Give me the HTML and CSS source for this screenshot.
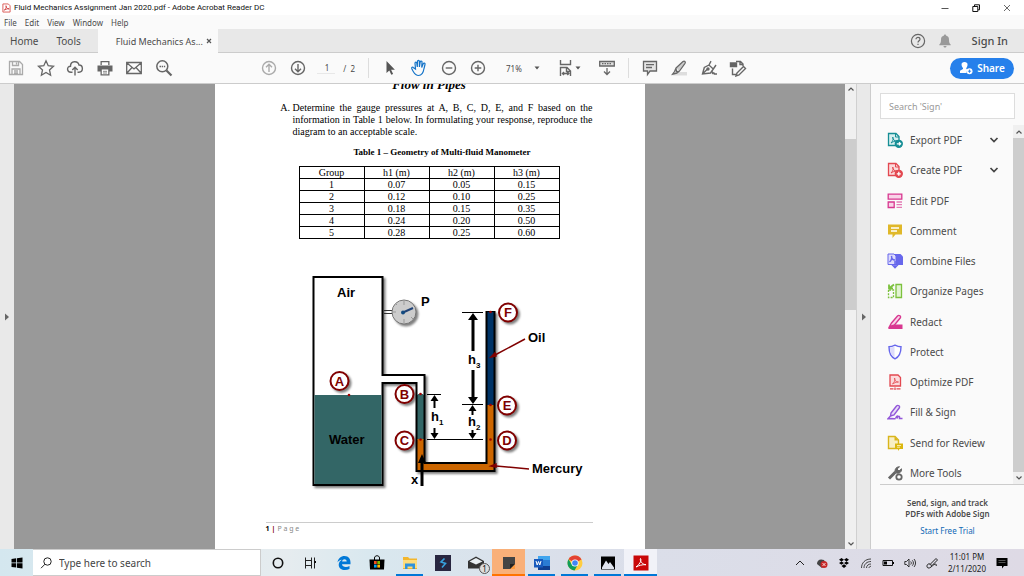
FILE: index.html
```
<!DOCTYPE html>
<html lang="en">
<head>
<meta charset="UTF-8">
<title>Fluid Mechanics Assignment Jan 2020.pdf - Adobe Acrobat Reader DC</title>
<link rel="stylesheet" href="styles.css">
</head>
<body>
    <header class="titlebar">
        <svg class="app-icon" viewBox="0 0 10 10"><path d="M1 .5h6l2 2v7H1z" fill="#fff" stroke="#d9534f"/><path d="M2.500 7.500C5 5 5 3 4.500 2.500S4.500 6 8 6C5 5.500 3.500 7 2.500 7.500" fill="none" stroke="#c81e1e" stroke-width=".8"/></svg>
        <span class="title">Fluid Mechanics Assignment Jan 2020.pdf - Adobe Acrobat Reader DC</span>
        <div class="window-buttons">
            <button aria-label="Minimize"><svg viewBox="0 0 8 8"><path d="M.5 4.500h7" stroke="#555"/></svg></button>
            <button aria-label="Restore"><svg viewBox="0 0 8 8" fill="none" stroke="#111"><path d="M.8 2.500h5v5h-5zM2.500 2V.8h5v5H6"/></svg></button>
            <button aria-label="Close"><svg viewBox="0 0 8 8"><path d="M1 1l6 6M7 1L1 7" stroke="#444" stroke-width=".8"/></svg></button>
        </div>
    </header>
    <nav class="menubar">
        <button>File</button>
        <button>Edit</button>
        <button>View</button>
        <button>Window</button>
        <button>Help</button>
    </nav>
    <div class="tabbar">
        <button class="tab">Home</button>
        <button class="tab tools-tab">Tools</button>
        <div class="doc-tab">
            <button class="tab-name">Fluid Mechanics As...</button>
            <button class="tab-close" aria-label="Close tab"><svg viewBox="0 0 6 6"><path d="M1 1l4 4M5 1L1 5" stroke="#555" stroke-width="1.200"/></svg></button>
        </div>
        <div class="account">
            <button aria-label="Help"><svg viewBox="0 0 16 16" fill="none" stroke="#666" stroke-width="1.200"><circle cx="8" cy="8" r="6.600"/><path d="M6 6.300c0-2.500 4-2.500 4 0C10 7.800 8 7.800 8 9.500M8 10.800v1.200"/></svg></button>
            <button aria-label="Notifications"><svg viewBox="0 0 16 16" fill="#999"><path d="M8 1.500c.7 0 1 .4 1 1 2.300.6 3 2.300 3 4.300 0 2.800.5 3.600 1.700 4.700v.8H2.300v-.8C3.500 10.400 4 9.600 4 6.800c0-2 .7-3.700 3-4.300 0-.6.3-1 1-1zM6.500 13h3c0 2-3 2-3 0z"/></svg></button>
            <button class="sign-in">Sign In</button>
        </div>
    </div>
    <div class="toolbar">
        <div class="group file-group">
            <button aria-label="Save"><svg viewBox="0 0 18 18" fill="none" stroke="#aaa" stroke-width="1.300"><path d="M2.500 2.500h10l3 3v10h-13zM5.500 2.500v4h6v-4M5 15.500V10h8v5.500M7 12h4M7 14h4M9.500 3.500v2"/></svg></button>
            <button aria-label="Star"><svg viewBox="0 0 18 18" fill="none" stroke="#666" stroke-width="1.300"><path d="M9 1.800l2.200 4.900 5.300.6-4 3.600 1.100 5.300L9 13.500l-4.600 2.700 1.100-5.300-4-3.600 5.300-.6z"/></svg></button>
            <button aria-label="Upload"><svg viewBox="0 0 18 18" fill="none" stroke="#666" stroke-width="1.400"><path d="M6.500 13.200H5c-4.500 0-4.500-6-.5-6C4.500 1.500 12 1.500 13 6c4.500 0 4.500 7.200 0 7.200h-1.500M9 16.500V8.500M6.300 11L9 8.200l2.700 2.800"/></svg></button>
            <button aria-label="Print"><svg viewBox="0 0 18 18"><path d="M4.500 2h9v4h-9zM1.500 6.500h15v6h-3v4h-9v-4h-3z" fill="#666"/><path d="M5.800 3.300h6.400V6H5.800zM5.800 10.500h6.400v4.700H5.800z" fill="#fff"/><path d="M7 12.300h4M7 14h4" stroke="#888"/></svg></button>
            <button aria-label="Email"><svg viewBox="0 0 18 18" fill="none" stroke="#666" stroke-width="1.300"><path d="M1.700 3.500h14.600v11H1.700zM2 4l7 6 7-6M2 14l5-5.500M16 14l-5-5.500"/></svg></button>
            <button aria-label="Find"><svg viewBox="0 0 18 18" fill="none" stroke="#666" stroke-width="1.500"><circle cx="7.300" cy="7.300" r="5.500"/><path d="M11.500 11.500l5 5" stroke-width="2.200"/><path d="M4.500 7.500H6M6.700 7.500H8M8.800 7.500h1.400"/></svg></button>
        </div>
        <div class="group page-group">
            <button aria-label="Previous page"><svg viewBox="0 0 18 18" fill="none" stroke="#aaa" stroke-width="1.400"><circle cx="9" cy="9" r="6.500"/><path d="M9 13V5.500M6 8.300l3-3 3 3"/></svg></button>
            <button aria-label="Next page"><svg viewBox="0 0 18 18" fill="none" stroke="#666" stroke-width="1.400"><circle cx="9" cy="9" r="6.500"/><path d="M9 5v7.500M6 9.700l3 3 3-3"/></svg></button>
            <input class="page-no" type="text" value="1" aria-label="Page number">
            <span class="page-total">/&nbsp; 2</span>
        </div>
        <div class="group view-group">
            <button aria-label="Select"><svg viewBox="0 0 18 18"><path d="M5.500 2v12l2.800-2.600 2 4.300 1.800-.8-2-4.200h3.800z" fill="#555"/></svg></button>
            <button aria-label="Hand"><svg viewBox="0 0 18 18" fill="none" stroke="#1473c8" stroke-width="1.200"><path d="M5.500 10L5 4.200c0-1.500 1.600-1.500 1.800 0L7.300 8 7.500 2.500c0-1.500 1.900-1.500 1.900 0V8l.8-5c.2-1.400 2-1.200 1.800.2L11.700 8.500l1.500-3.700c.6-1.300 2.200-.6 1.800.7l-1 4c-.6 4-2 7-5.500 7-3 0-4-2-5.500-4.500L1.800 9.700c-.5-1.300.8-2 1.700-1z"/></svg></button>
            <button aria-label="Zoom out"><svg viewBox="0 0 18 18" fill="none" stroke="#666" stroke-width="1.400"><circle cx="9" cy="9" r="6.500"/><path d="M5.700 9h6.600"/></svg></button>
            <button aria-label="Zoom in"><svg viewBox="0 0 18 18" fill="none" stroke="#666" stroke-width="1.400"><circle cx="9" cy="9" r="6.500"/><path d="M5.700 9h6.600M9 5.700v6.600"/></svg></button>
        </div>
        <button class="zoom-level">71%<svg class="caret" viewBox="0 0 6 4"><path d="M.5.500h5L3 3.500z" fill="#555"/></svg></button>
        <div class="group fit-group">
            <button class="fit" aria-label="Fit page"><svg viewBox="0 0 18 18" fill="none" stroke="#666" stroke-width="1.400"><path d="M3.500 1v4.500h10V1M3.500 17V8.500h6.500l3.500 3.500v5M9.500 8.500v4h4M5.500 14.500h6M7 13l-1.500 1.500L7 16M10.300 13l1.500 1.500-1.500 1.500"/></svg><svg class="caret" viewBox="0 0 6 4"><path d="M.5.500h5L3 3.500z" fill="#555"/></svg></button>
            <button aria-label="Toolbar dock"><svg viewBox="0 0 18 18" fill="none" stroke="#666" stroke-width="1.300"><path d="M1.700 2.500h14.600v4.500H1.700z" fill="#ddd"/><path d="M4 4.700h10" stroke-dasharray="1.500 1"/><path d="M9 9v6M6 12.500l3 3 3-3"/></svg></button>
        </div>
        <div class="group markup-group">
            <button aria-label="Comment"><svg viewBox="0 0 18 18" stroke="#666" stroke-width="1.300"><path d="M2.500 2.500h13v9.500H9l-2.500 3.500V12h-4z" fill="#e4e4e4"/><path d="M5 5.700h8M5 8.500h6"/></svg></button>
            <button aria-label="Highlight"><svg viewBox="0 0 18 18" fill="none" stroke="#666" stroke-width="1.200"><path d="M6 13h11v3.500H2z" fill="#ddd" stroke="none"/><path d="M6 9l7-6.500c1.500-1 3 .3 2 1.800L9.500 12l-3 .5zM6 9l-1.500 3.500-2 2.700 4.300-1 2.700-2.200" fill="#ccc"/></svg></button>
            <button aria-label="Sign"><svg viewBox="0 0 18 18" fill="none" stroke="#666" stroke-width="1.400"><path d="M2.500 15L4.300 8.500 9 6l4.300 4-2.800 4zM2.500 15l5-5M9 6l2-3.800M13.300 10l2.700-4M10.500 14.500c1-2.500 3-2 2 .5 1-1.500 2-1.500 2 0H17"/><circle cx="8" cy="10" r="1" fill="#666"/></svg></button>
            <button aria-label="More"><svg viewBox="0 0 18 18" fill="none" stroke="#666" stroke-width="1.400"><path d="M7 2.500h4.500L14 5v2M3.500 9.500v6H7M11 2.500v3h3M8 14l6.500-6.500 2 2L10 16l-3 1z"/><path d="M1.500 4h6v3.500h-6z" fill="#666"/></svg></button>
        </div>
        <button class="share"><svg viewBox="0 0 14 14"><path d="M5.500 1c4 0 3.500 4 1.800 6v1l1.500.7A4 4 0 0 0 7.500 12H1V9.700L4 8V7C2.200 5 1.500 1 5.500 1z" fill="#fff"/><circle cx="10.500" cy="10.200" r="3" fill="#fff"/><path d="M8.900 10.200h3.200M10.500 8.600v3.200" stroke="#2680eb" stroke-width=".9"/></svg>Share</button>
    </div>

    <main class="workspace">
        <button class="rail left-rail" aria-label="Open navigation pane"><svg viewBox="0 0 6 8"><path d="M1 .5l4 3.500-4 3.500z" fill="#666"/></svg></button>
        <div class="viewer">
            <article class="page">
                <h1 class="page-title">Flow in Pipes</h1>
                <ol class="question">
                    <li>Determine the gauge pressures at A, B, C, D, E, and F based on the information in Table 1 below. In formulating your response, reproduce the diagram to an acceptable scale.</li>
                </ol>
                <table class="geometry">
                    <caption>Table 1 – Geometry of Multi-fluid Manometer</caption>
                    <thead>
                        <tr><th>Group</th><th>h1 (m)</th><th>h2 (m)</th><th>h3 (m)</th></tr>
                    </thead>
                    <tbody>
                        <tr><td>1</td><td>0.07</td><td>0.05</td><td>0.15</td></tr>
                        <tr><td>2</td><td>0.12</td><td>0.10</td><td>0.25</td></tr>
                        <tr><td>3</td><td>0.18</td><td>0.15</td><td>0.35</td></tr>
                        <tr><td>4</td><td>0.24</td><td>0.20</td><td>0.50</td></tr>
                        <tr><td>5</td><td>0.28</td><td>0.25</td><td>0.60</td></tr>
                    </tbody>
                </table>
                <svg class="manometer" viewBox="300 265 300 230">
                    <!-- tank -->
                    <g class="shadow">
                        <rect x="313.500" y="277" width="69" height="208" fill="#fff" stroke="#000" stroke-width="2"/>
                        <path d="M314.500 395h67v89h-67z" fill="#366"/>
                    </g>
                    <!-- pipe -->
                    <g class="shadow" fill="none">
                        <path d="M382 379H420.500V467H490.500V311" stroke="#000" stroke-width="10"/>
                        <path d="M381 379H420.500V395" stroke="#fff" stroke-width="6"/>
                        <path d="M420.500 394V440" stroke="#366" stroke-width="6"/>
                        <path d="M420.500 439V467H490.500V405" stroke="#c60" stroke-width="6"/>
                        <path d="M490.500 405V312" stroke="#036" stroke-width="6"/>
                    </g>
                    <!-- gauge -->
                    <path d="M384 310.500h9M384 313.500h9" stroke="#333"/>
                    <g class="shadow">
                        <circle cx="404" cy="312" r="12" fill="#ccc" stroke="#777"/>
                        <path d="M404 301v4M404 319v4M396 312h-3M411 317l2 2M397 305l-2-2" stroke="#999"/>
                        <path d="M403 312.500l10-4.500" stroke="#247" stroke-width="2"/>
                        <circle cx="403" cy="312.500" r="2" fill="#124a80"/>
                    </g>
                    <!-- dimension lines -->
                    <g stroke="#000">
                        <path d="M427 394.500h14M427 439.500h56M462 312.500h21M462 404.500h21"/>
                        <path d="M434.500 398v10M434.500 428v8M472.500 408v7M472.500 430v6" stroke-width="2"/>
                        <path d="M473 318v33M473 370v29" stroke-width="3"/>
                        <path d="M422 486v-24" stroke-width="3"/>
                    </g>
                    <path d="M434.500 395l4 6h-8zM434.500 439l4-6h-8zM472.500 405l4 6h-8zM472.500 439l4-6h-8zM473 313l5 7h-10zM473 404l5-7h-10zM422 454l4 9h-8z"/>
                    <!-- pointers -->
                    <g stroke="#800000" stroke-width="1.500" fill="#800000">
                        <path d="M525 339l-30 16M529 469l-33-3"/>
                        <path d="M491 357l4-4 1 3zM491 466l5-2v3z"/>
                    </g>
                    <g fill="#a00000">
                        <circle cx="349" cy="395" r="1.300"/><circle cx="420.500" cy="394" r="1.300"/><circle cx="420.500" cy="439.500" r="1.300"/>
                        <circle cx="490.500" cy="312" r="1.300"/><circle cx="490.500" cy="405" r="1.300"/><circle cx="490.500" cy="439.500" r="1.300"/>
                    </g>
                    <g class="points shadow">
                        <circle cx="339.500" cy="381" r="9"/><circle cx="404.500" cy="394" r="9"/><circle cx="404.500" cy="440.500" r="9"/>
                        <circle cx="508" cy="312.500" r="9"/><circle cx="507" cy="405.500" r="9"/><circle cx="507" cy="440.500" r="9"/>
                    </g>
                    <g class="point-names">
                        <text x="339.500" y="386">A</text><text x="404.500" y="399">B</text><text x="404.500" y="445">C</text>
                        <text x="508" y="317">F</text><text x="507" y="410">E</text><text x="507" y="445">D</text>
                    </g>
                    <g class="labels">
                        <text x="337" y="297">Air</text>
                        <text x="329" y="444">Water</text>
                        <text x="421" y="306">P</text>
                        <text x="528" y="342">Oil</text>
                        <text x="532" y="473">Mercury</text>
                        <text x="411" y="484">x</text>
                        <text x="431" y="421">h<tspan class="sub" dy="4">1</tspan></text>
                        <text x="468" y="426">h<tspan class="sub" dy="4">2</tspan></text>
                        <text x="468" y="364">h<tspan class="sub" dy="4">3</tspan></text>
                    </g>
                </svg>
                <footer class="page-footer"><b>1</b><span class="bar">|</span>P a g e</footer>
            </article>
        </div>
        <div class="scrollbar doc-scroll">
            <svg viewBox="0 0 8 8"><path d="M1.500 5.500L4 3l2.500 2.500" fill="none" stroke="#555" stroke-width="1.200"/></svg>
            <div class="thumb"></div>
            <svg viewBox="0 0 8 8"><path d="M1.500 2.500L4 5l2.500-2.500" fill="none" stroke="#555" stroke-width="1.200"/></svg>
        </div>
        <button class="rail right-rail" aria-label="Close tools pane"><svg viewBox="0 0 6 8"><path d="M1 .5l4 3.500-4 3.500z" fill="#666"/></svg></button>
        <aside class="sidebar">
            <input class="tool-search" type="text" placeholder="Search 'Sign'" aria-label="Search tools">
            <div class="tools">
                <div class="tool-list">
                    <button><svg viewBox="0 0 16 16" fill="none" stroke="#168e95" stroke-width="1.300"><path d="M1.500 1.500h7.500L12 4.500v9H1.500z" fill="#d7efef"/><path d="M8.500 1.500V5H12M4 11c3-3 2-5 1.700-6 0 3 2 4 4.300 4-3 0-4 1-6 2z" stroke-width="1"/><circle cx="11.800" cy="11.800" r="3.500" fill="#168e95"/><path d="M9.800 11.800h3.500M12 10.200l1.600 1.600-1.600 1.600" stroke="#fff"/></svg>Export PDF<svg class="chevron" viewBox="0 0 10 6"><path d="M1.500 1l3.500 3.500L8.500 1" fill="none" stroke="#444" stroke-width="1.700"/></svg></button>
                    <button><svg viewBox="0 0 16 16" fill="none" stroke="#e34850" stroke-width="1.300"><path d="M1.500 1.500h7.500L12 4.500v9H1.500z" fill="#fbdadb"/><path d="M8.500 1.500V5H12M4 11c3-3 2-5 1.700-6 0 3 2 4 4.300 4-3 0-4 1-6 2z" stroke-width="1"/><circle cx="11.800" cy="11.800" r="3.500" fill="#e34850"/><path d="M9.800 11.800h4M11.800 9.800v4" stroke="#fff"/></svg>Create PDF<svg class="chevron" viewBox="0 0 10 6"><path d="M1.500 1l3.500 3.500L8.500 1" fill="none" stroke="#444" stroke-width="1.700"/></svg></button>
                    <button><svg viewBox="0 0 16 16" fill="#f9d3e8" stroke="#d83790" stroke-width="1.300"><path d="M1.200 1.200h13.600v5H1.200zM1.200 9h6v5.500h-6z"/><path d="M9.500 9h5.500M9.500 11.700h5.500M9.500 14.400h5.500" stroke="#e47bb5"/></svg>Edit PDF</button>
                    <button><svg viewBox="0 0 16 16"><path d="M1 1.500h14v10H8.500L5.500 15v-3.500H1z" fill="#e0b82a"/><path d="M4 5h8M4 8h6" stroke="#fff" stroke-width="1.300"/></svg>Comment</button>
                    <button><svg viewBox="0 0 16 16"><path d="M8 1h5.500L16 3.500V12H8z" fill="#6767ec"/><path d="M1 1h6l2 2v8.500H1z" fill="#dedcfb" stroke="#6767ec"/><path d="M2.500 9C5 7 5 4 4.500 3c0 3 1.500 4 3.500 4M8 8v6.500M5 11.500l3 3.200 3-3.200" fill="none" stroke="#6767ec" stroke-width="1.500"/></svg>Combine Files</button>
                    <button><svg viewBox="0 0 16 16" fill="none" stroke="#7cc13d" stroke-width="1.300"><path d="M9 1.500h5.500v13H9z" fill="#e2f4d3"/><path d="M1.500 7v7.500h5V7z" stroke-dasharray="2 1.200"/><path d="M7 1.500L2.500 5M2 1.500V5.500h4" stroke-width="1.800"/></svg>Organize Pages</button>
                    <button><svg viewBox="0 0 16 16"><path d="M5 10.500h10.500V15H1z" fill="#d83790"/><path d="M4.500 9L10.500 2c1.500-1.500 4 .2 2.700 2L7.500 11l-3 1-2.800 2z" fill="#f9d3e8" stroke="#d83790" stroke-width="1.400"/></svg>Redact</button>
                    <button><svg viewBox="0 0 16 16"><path d="M8 1.200c2 1 4 1.600 6 1.600 0 6-1 9.800-6 12-5-2.200-6-6-6-12 2 0 4-.6 6-1.600z" fill="#fff" stroke="#6767ec" stroke-width="1.400"/><path d="M7.500 2.500C6 3.200 4.500 3.700 3 3.800c.1 4.500.8 7.500 4.500 9.500z" fill="#dedcfb"/></svg>Protect</button>
                    <button><svg viewBox="0 0 16 16" fill="none" stroke="#e34850" stroke-width="1.300"><path d="M3 1h8l2.500 2.500V12H3z" fill="#fbdadb"/><path d="M5.500 10c3-3 2.500-5 2-6 0 3 1.500 4 4 4-3 0-4 1-6 2z" stroke-width=".8"/><path d="M3 14.800h3.500M8 13.500v2.500M9.500 14.800h4"/></svg>Optimize PDF</button>
                    <button><svg viewBox="0 0 16 16" fill="none" stroke="#9256d9" stroke-width="1.400"><path d="M4 9l5.500-7c1.500-1.500 4 .2 2.700 2L7 11l-3.500 1zM3.500 12L1 14.800h7.500" fill="#e9dcf9"/><path d="M8.500 14.500c1.500-4 3-3 1.500 0 2-4 3-2 2.500 0h3"/></svg>Fill &amp; Sign</button>
                    <button><svg viewBox="0 0 16 16"><path d="M1.500 1.500H8L11.500 5v8.500h-10z" fill="#f8efc5" stroke="#d9b51c" stroke-width="1.400"/><path d="M7.500 1.500l4 4h-4z" fill="#d9b51c"/><path d="M8 8.500h8V14h-3.500L11 16v-2H8z" fill="#dbb70f"/><path d="M10 10.500h4M10 12.200h3" stroke="#fff8d0" stroke-width=".8"/></svg>Send for Review</button>
                    <button><svg viewBox="0 0 16 16" fill="none" stroke="#666"><path d="M2 13.500L8.500 7" stroke-width="3"/><path d="M12.500 1.800L10 4l2 2 2.500-2.200C15 7 12 9 9.500 8 6.500 6.500 8.500 1.500 12.500 1.800z" fill="#666"/><circle cx="12" cy="12" r="2.700" stroke-width="1.800" fill="#fff"/></svg>More Tools</button>
                </div>
                <div class="scrollbar tool-scroll">
                    <svg viewBox="0 0 8 8"><path d="M1.500 5.500L4 3l2.500 2.500" fill="none" stroke="#555" stroke-width="1.200"/></svg>
                    <div class="thumb"></div>
                    <svg viewBox="0 0 8 8"><path d="M1.500 2.500L4 5l2.500-2.500" fill="none" stroke="#555" stroke-width="1.200"/></svg>
                </div>
            </div>
            <div class="promo">
                <p>Send, sign, and track<br>PDFs with Adobe Sign</p>
                <a href="#">Start Free Trial</a>
            </div>
        </aside>
    </main>

    <footer class="taskbar">
        <button class="start" aria-label="Start"><svg viewBox="0 0 12 12"><path d="M.5 2l4.700-.7v4.200H.5zM6 1.200L11.500.4v5.100H6zM.5 6.300h4.700v4.300L.5 10zM6 6.300h5.500v5.200L6 10.700z"/></svg></button>
        <label class="search"><svg viewBox="0 0 12 12" fill="none" stroke="#222"><circle cx="7.500" cy="4.500" r="3.700"/><path d="M5 7.200L1 11.200"/></svg><input type="text" placeholder="Type here to search" aria-label="Type here to search"></label>
        <div class="apps">
            <button aria-label="Cortana"><svg viewBox="0 0 16 16"><circle cx="8" cy="8" r="4.700" fill="none" stroke="#111" stroke-width="1.600"/></svg></button>
            <button aria-label="Task view"><svg viewBox="0 0 16 16" fill="none" stroke="#222"><path d="M2.500 5.500h6v5h-6zM2.500 2.500v11M8.500 2.500v11M11.500 2.500v11"/><path d="M11 6h2v2h-2z" fill="#111" stroke="none"/></svg></button>
            <button aria-label="Edge"><svg viewBox="0 0 16 16"><path d="M1.500 7.500C2 3.500 5 1 8.500 1c4.300 0 6 3.200 6 6.500v1.700H6c.2 3 4.800 3.500 7.500 1.700v3C9 16.200 2.700 15 2.700 9.800c0-2.300 1.300-4 3.200-5C3.700 5 2.300 6.200 1.500 7.500zM6.100 6.500h4.600C10.600 3.500 6.500 3.500 6.100 6.500z" fill="#0078d7"/></svg></button>
            <button aria-label="Store"><svg viewBox="0 0 16 16"><path d="M5.500 5V3c0-3 5-3 5 0v2" fill="none" stroke="#000"/><path d="M.5 4.500h15l-.5 10H1z"/><path d="M5 6h2.700v3H5z" fill="#f25022"/><path d="M8.300 6H11v3H8.300z" fill="#7fba00"/><path d="M5 9.600h2.700v3H5z" fill="#00a4ef"/><path d="M8.300 9.600H11v3H8.300z" fill="#ffb900"/></svg></button>
            <button class="open" aria-label="File Explorer"><svg viewBox="0 0 16 16"><path d="M1 2h5l1.500 1.500H15V14H1z" fill="#f3b62c"/><path d="M1 5h14v8H1z" fill="#fddc7c"/><path d="M3 8.500h10V14h-2.500v-2.500h-5V14H3z" fill="#2f92dc"/></svg></button>
            <button aria-label="Launcher"><svg viewBox="0 0 16 16"><path d="M0 0h16v16H0z" fill="#282640"/><path d="M9.500 3.500L6 7l4.500 1.500L7 12.500" fill="none" stroke="#37a2de" stroke-width="1.600"/></svg></button>
            <button class="mail" aria-label="Mail"><svg viewBox="0 0 16 16"><path d="M0 6l8-4.500L16 6v7.500H0z" fill="#333"/><path d="M1.500 6.500L8 3l6.500 3.500L8 9.500z" fill="#e8eef2"/></svg><span class="badge">1</span></button>
            <button class="attention" aria-label="Sticky Notes"><svg viewBox="0 0 16 16"><path d="M2 2h12v7l-5 5H2z" fill="#444"/><path d="M14 9v5H9z" fill="#ff9b3e"/><path d="M9 9h5l-5 5z" fill="#222"/></svg></button>
            <button class="open" aria-label="Word"><svg viewBox="0 0 16 16"><path d="M4 1h12v14H4z" fill="#2b7cd3"/><path d="M4 1h12v4H4z" fill="#41a5ee"/><path d="M4 11h12v4H4z" fill="#103f91"/><path d="M0 4h9v8.500H0z" fill="#185abd"/><path d="M2 6l1.200 4L4.500 6.500 5.800 10 7 6" fill="none" stroke="#fff"/></svg></button>
            <button class="open" aria-label="Chrome"><svg viewBox="0 0 16 16"><circle cx="8" cy="8" r="7.500" fill="#ffcd40"/><path d="M8 8L1.500 4.200A7.500 7.500 0 0 1 14.500 4.500z" fill="#e34133"/><path d="M1.500 4.200A7.500 7.500 0 0 0 7.500 15.500L11 9.500 8 8 4.500 9z" fill="#109d59"/><circle cx="8" cy="8" r="3.600" fill="#fff"/><circle cx="8" cy="8" r="2.800" fill="#4285f4"/></svg></button>
            <button class="open" aria-label="Photos"><svg viewBox="0 0 16 16"><path d="M1 1.500h14v13H1z"/><path d="M2 12.500l4-7 2.500 3.500L10 7l4 5.500V14H2z" fill="#dfe3ed"/></svg></button>
            <button class="open active" aria-label="Acrobat Reader"><svg viewBox="0 0 16 16"><path d="M.5.500h15v15H.5z" fill="#c90808"/><path d="M3 12C8 8 8.500 5 7.500 3.500c-1 2 1.500 6 5.500 6.200-4-.2-7 .8-10 2.300z" fill="none" stroke="#fff"/></svg></button>
        </div>
        <div class="tray">
            <button aria-label="Show hidden icons"><svg viewBox="0 0 12 12"><path d="M2 8l4-4 4 4" fill="none" stroke="#222"/></svg></button>
            <button aria-label="Sync status"><svg viewBox="0 0 12 12"><path d="M1 7c0-4 3-5.500 7-4l2 4-4 4z" fill="#444"/><circle cx="8" cy="7.500" r="3.500" fill="#c62828"/><path d="M6.500 6l3 3M9.500 6l-3 3" stroke="#fff" stroke-width=".8"/></svg></button>
            <button aria-label="Dropbox"><svg viewBox="0 0 12 12"><path d="M3.500 1L6 2.700 3.500 4.400 1 2.700zM8.500 1L11 2.700 8.500 4.400 6 2.700zM3.500 4.400L6 6.100 3.500 7.800 1 6.100zM8.500 4.400L11 6.100 8.500 7.800 6 6.100zM6 7.300l2.500 1.700L6 11 3.500 9z"/></svg></button>
            <button aria-label="Wi-Fi"><svg viewBox="0 0 12 12" fill="none" stroke="#333" stroke-width=".9"><path d="M1.500 11C1.500 6 5 2 11 2M4 11c0-4 3-6.500 7-6.500M6.500 11c0-2.500 2-4 4.500-4M9 11c0-1 .8-1.700 2-1.700"/></svg></button>
            <button aria-label="Battery"><svg viewBox="0 0 12 12"><path d="M1 3.500h9.500v5H1z" fill="none" stroke="#111"/><path d="M2 4.500h3v3H2zM11 5h1v2h-1z"/></svg></button>
            <button aria-label="Volume"><svg viewBox="0 0 12 12" fill="none" stroke="#222" stroke-width=".9"><path d="M.8 4.500h1.700L5 2v8L2.500 7.500H.8zM6.700 4.500c.8 1 .8 2 0 3M8.300 3.300c1.500 1.700 1.500 3.700 0 5.400M10 2c2 2.500 2 5.500 0 8"/></svg></button>
            <button aria-label="Pen workspace"><svg viewBox="0 0 12 12" fill="none" stroke="#222"><path d="M4 7.500L10 1.500l1.500 1.500L6 8.500zM4 7c-3-1-4 3-2 4 2 .5 4-2 6-3.500 2-1 3 0 2 1.500"/></svg></button>
            <div class="clock"><span>11:01 PM</span><span>2/11/2020</span></div>
            <button aria-label="Notifications"><svg viewBox="0 0 12 12"><path d="M.5 1h11v8H8L6 11.500V9H.5z"/><path d="M2.500 3.500h7M2.500 5.500h7" stroke="#777" stroke-width=".7"/></svg></button>
        </div>
    </footer>
</body>
</html>
```

FILE: styles.css
```
* {
    box-sizing: border-box;
}

body {
    margin: 0;
    height: 100vh;
    display: flex;
    flex-direction: column;
    overflow: hidden;
    font-family: "Noto Sans", "Open Sans", sans-serif;
    font-size: 10px;
    color: #4b4b4b;
    background: #fafafa;
}

button {
    display: flex;
    align-items: center;
    justify-content: center;
    margin: 0;
    padding: 0;
    border: 0;
    background: none;
    font: inherit;
    color: inherit;
    white-space: nowrap;
}

input {
    font: inherit;
    color: inherit;
    border: 0;
    padding: 0;
    min-width: 0;
}

svg {
    flex: none;
}

/* title and menu */
.titlebar {
    display: flex;
    align-items: center;
    height: 15px;
    padding-left: 2px;
    background: #fff;
    font-family: Roboto, sans-serif;
    font-size: 8px;
    color: #111;
}

.app-icon {
    width: 9px;
    height: 10px;
    margin-right: 3px;
}

.window-buttons {
    display: flex;
    gap: 1px;
    margin-left: auto;
    padding-right: 2px;
}

.window-buttons button {
    width: 30px;
}

.window-buttons svg {
    width: 8px;
    height: 8px;
}

.menubar {
    display: flex;
    align-items: center;
    gap: 8px;
    height: 14px;
    padding-left: 4px;
    font-size: 8px;
}

/* tabs */
.tabbar {
    display: flex;
    height: 24px;
    background: #e8e8e8;
    border-bottom: 1px solid #ccc;
}

.tab {
    padding-left: 10px;
}

.tools-tab {
    padding: 0 17px 0 18px;
}

.doc-tab {
    display: flex;
    align-items: center;
    justify-content: space-between;
    width: 120px;
    margin-bottom: -1px;
    padding: 0 6px 0 18px;
    background: #fafafa;
}

.tab-name {
    font-size: 9px;
}

.tab-close svg {
    width: 6px;
    height: 6px;
}

.account {
    display: flex;
    align-items: center;
    gap: 11px;
    margin-left: auto;
    padding-right: 16px;
}

.account svg {
    width: 16px;
    height: 16px;
}

.sign-in {
    padding-left: 8px;
    font-size: 11px;
    font-weight: 500;
}

/* toolbar */
.toolbar {
    display: flex;
    align-items: center;
    height: 31px;
    padding: 0 10px 0 6px;
    border-bottom: 1px solid #ccc;
    font-size: 8px;
}

.toolbar svg {
    width: 18px;
    height: 18px;
}

.toolbar .caret {
    width: 6px;
    height: 4px;
}

.group {
    display: flex;
    align-items: center;
    justify-content: space-between;
}

.group button {
    width: 20px;
}

.file-group {
    width: 168px;
}

.page-group {
    width: 110px;
    height: 20px;
    margin-left: 85px;
    border-right: 1px solid #ddd;
    padding-right: 13px;
}

.page-no {
    width: 18px;
    padding-left: 3px;
    text-align: center;
    background: none;
    border-bottom: 1px solid #e8e8e8;
}

.view-group {
    width: 108px;
    margin-left: 11px;
}

.zoom-level {
    justify-content: space-between;
    width: 42px;
    margin-left: 12px;
    padding: 0 2px 0 6px;
}

.fit-group {
    width: 73px;
    height: 20px;
    margin-left: 14px;
    padding-right: 11px;
    border-right: 1px solid #ddd;
}

.group .fit {
    width: 26px;
}

.markup-group {
    width: 108px;
    margin-left: 11px;
}

.share {
    gap: 4px;
    width: 64px;
    height: 21px;
    margin-left: auto;
    border-radius: 11px;
    background: #2680eb;
    color: #fff;
    font-size: 10px;
    font-weight: 600;
}

.toolbar .share svg {
    width: 14px;
    height: 14px;
}

/* workspace */
.workspace {
    display: flex;
    flex: 1;
    min-height: 0;
}

.rail {
    width: 14px;
    background: #e9e9e9;
}

.rail svg {
    width: 6px;
    height: 8px;
}

.right-rail {
    width: 15px;
    border-left: 1px solid #d0d0d0;
    border-right: 1px solid #ccc;
}

.viewer {
    display: flex;
    justify-content: center;
    flex: 1;
    overflow: hidden;
    background: #999;
}

.page {
    width: 430px;
    padding: 0 52px 0 51px;
    background: #fff;
    color: #000;
    font-family: "Liberation Serif", serif;
    font-size: 10px;
    line-height: 12px;
}

.page-title {
    margin: -7px 0 10px;
    font-size: 13px;
    font-style: italic;
    line-height: 15px;
    text-align: center;
}

.question {
    margin: 0;
    padding-left: 27px;
    list-style: upper-alpha;
    text-align: justify;
}

.geometry {
    width: 261px;
    margin: 8px auto 0 33px;
    border-collapse: collapse;
    table-layout: fixed;
    line-height: 11px;
    text-align: center;
}

.geometry caption {
    margin-bottom: 8px;
    padding-left: 26px;
    font-size: 9px;
    font-weight: bold;
    line-height: 12px;
    white-space: nowrap;
}

.geometry th,
.geometry td {
    padding: 0;
    border: 1px solid #000;
    font-weight: normal;
}

.manometer {
    display: block;
    width: 300px;
    height: 230px;
    margin: 26px 0 27px 34px;
}

.shadow {
    filter: drop-shadow(2px 2px 1px rgba(0, 0, 0, 0.5));
}

.points {
    fill: #fff;
    stroke: #800000;
    stroke-width: 2px;
}

.labels,
.point-names {
    font-family: "Liberation Sans", sans-serif;
    font-size: 13px;
    font-weight: bold;
}

.point-names {
    fill: #800000;
    text-anchor: middle;
}

.labels .sub {
    font-size: 8px;
}

.page-footer {
    border-top: 1px solid #ccc;
    font-family: "Noto Sans", sans-serif;
    font-size: 7px;
    color: #888;
}

.page-footer b {
    color: #000;
}

.page-footer .bar {
    margin: 0 2px;
    color: #800000;
    font-weight: bold;
}

.scrollbar {
    display: flex;
    flex-direction: column;
    align-items: center;
    justify-content: space-between;
    background: #f0f0f0;
}

.scrollbar svg {
    width: 8px;
    height: 8px;
}

.thumb {
    width: 100%;
    background: #cdcdcd;
}

.doc-scroll {
    width: 11px;
    padding: 1px 0;
}

.doc-scroll .thumb {
    height: 37%;
    margin: 46px 0 auto;
}

/* tools pane */
.sidebar {
    display: flex;
    flex-direction: column;
    width: 153px;
    padding-left: 9px;
}

.tool-search {
    height: 26px;
    margin: 9px 9px 6px 0;
    padding-left: 8px;
    border: 1px solid #ddd;
    background: #fff;
    font-size: 9px;
}

.tool-search::placeholder {
    color: #999;
}

.tools {
    display: flex;
    flex: 1;
    min-height: 0;
    overflow: hidden;
    border-bottom: 1px solid #ccc;
}

.tool-list {
    display: grid;
    grid-auto-rows: 1fr;
    flex: 1;
    height: 363px;
}

.tool-list button {
    justify-content: flex-start;
    gap: 7px;
    padding-left: 7px;
}

.tool-list svg {
    width: 16px;
    height: 16px;
}

.tool-list .chevron {
    width: 10px;
    height: 6px;
    margin-left: auto;
    margin-right: 14px;
}

.tool-scroll {
    width: 11px;
    padding: 3px 0 2px;
}

.tool-scroll .thumb {
    flex: 1;
    margin: 2px 0;
}

.promo {
    height: 64px;
    padding: 12px 9px 0 0;
    text-align: center;
    font-size: 8px;
    line-height: 11px;
}

.promo p {
    margin: 0 0 6px;
    font-weight: 600;
}

.promo a {
    color: #1068b5;
    text-decoration: none;
}

/* taskbar */
.taskbar {
    display: flex;
    height: 27px;
    background: linear-gradient(90deg, #d4e7ef, #e6ecef 28%, #d9e8ef 36%, #dadfea 55%, #dedae5);
    color: #222;
}

.start {
    width: 33px;
}

.start svg,
.search svg {
    width: 12px;
    height: 12px;
}

.search {
    display: flex;
    align-items: center;
    gap: 7px;
    width: 228px;
    padding-left: 7px;
    border: 1px solid #ccc;
    border-left: 0;
    background: #fff;
}

.search input {
    flex: 1;
    background: none;
}

.search input::placeholder {
    color: #444;
}

.apps {
    display: flex;
}

.apps button {
    position: relative;
    width: 33px;
}

.apps svg {
    width: 16px;
    height: 16px;
}

/* running apps get a line under the icon */
.apps .open::after {
    content: "";
    position: absolute;
    bottom: 0;
    left: 3px;
    right: 3px;
    height: 2px;
    background: #0078d7;
}

.apps .attention {
    background: #f9b079;
    border-bottom: 2px solid #ff7300;
    border-top: 2px solid #f9b079;
}

.apps .active {
    background: #f1f2f8;
}

.apps .active::after {
    left: 0;
    right: 0;
}

.badge {
    position: absolute;
    right: 2px;
    bottom: 2px;
    width: 11px;
    height: 11px;
    border: 1px solid #555;
    border-radius: 50%;
    background: #ddd;
    color: #111;
    font-size: 8px;
    line-height: 9px;
    text-align: center;
}

.tray {
    display: flex;
    align-items: center;
    gap: 10px;
    margin-left: auto;
    padding-right: 16px;
}

.tray svg {
    width: 12px;
    height: 12px;
}

.clock {
    display: flex;
    flex-direction: column;
    align-items: center;
    width: 38px;
    font-size: 8px;
    line-height: 12px;
}
```
